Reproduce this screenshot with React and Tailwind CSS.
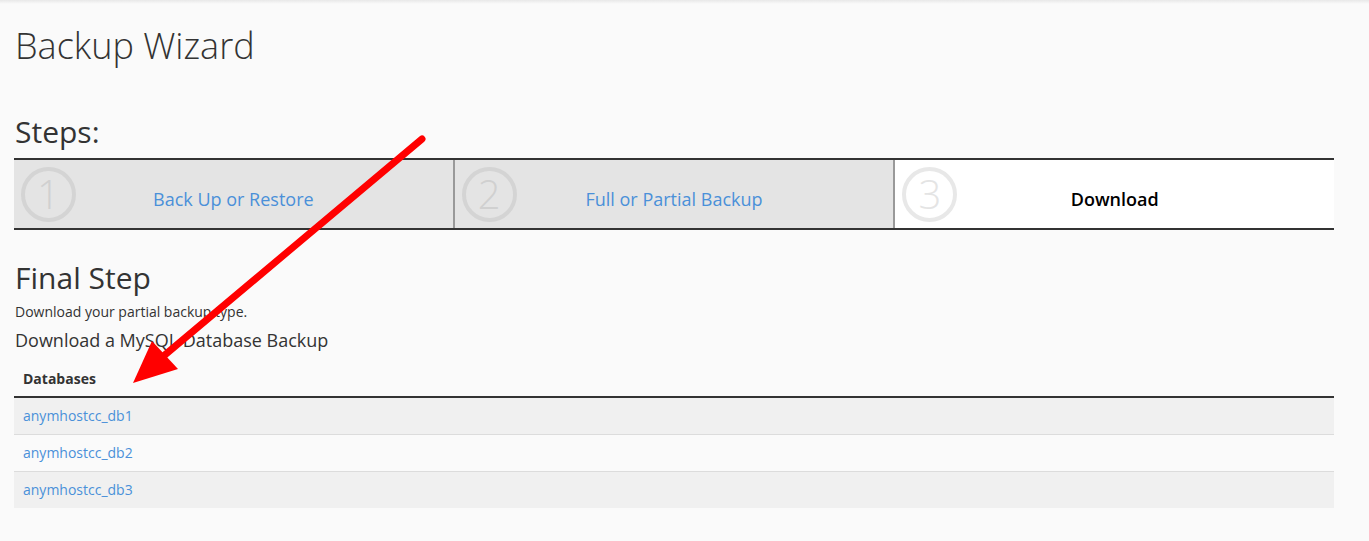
import React from 'react';

const steps = [
  { num: '1', label: 'Back Up or Restore', active: false },
  { num: '2', label: 'Full or Partial Backup', active: false },
  { num: '3', label: 'Download', active: true },
];

const databases = ['anymhostcc_db1', 'anymhostcc_db2', 'anymhostcc_db3'];

const StepCircle = ({ num, active }) => (
  <div
    className={`absolute left-[7px] top-[7px] w-[55px] h-[55px] rounded-full border-[4px] flex items-center justify-center font-light text-[40px] leading-none ${
      active ? 'border-[#e8e8e8] text-[#e4e4e4]' : 'border-[#d4d4d4] text-[#d0d0d0]'
    }`}
  >
    <span className="-mt-[2px]">{num}</span>
  </div>
);

const App = () => {
  return (
    <div className="relative min-h-[541px] bg-[#fafafa] font-['Open_Sans',sans-serif] text-[#333]">
      {/* top shadow */}
      <div className="h-[4px] bg-gradient-to-b from-[#e8e8e8] to-[#fafafa]" />

      <div className="pl-[14px] w-[1334px]">
        <h1 className="mt-[20px] pl-[1px] text-[36px] font-light leading-[44px] text-[#333]">Backup Wizard</h1>

        <h2 className="mt-[46px] pl-[1px] text-[30px] leading-[36px]">Steps:</h2>

        <div className="mt-[8px] flex border-y-2 border-[#333]">
          {steps.map((step, i) => (
            <div
              key={step.num}
              className={`relative flex-1 h-[68px] flex items-center justify-center pt-[10px] ${
                step.active ? 'bg-white' : 'bg-[#e4e4e4]'
              } ${i > 0 ? 'border-l-2 border-[#999]' : ''}`}
            >
              <StepCircle num={step.num} active={step.active} />
              {step.active ? (
                <span className="text-[18px] font-semibold text-black">{step.label}</span>
              ) : (
                <a href="#" className="text-[18px] text-[#4a90d9]">{step.label}</a>
              )}
            </div>
          ))}
        </div>

        <h2 className="mt-[30px] pl-[1px] text-[30px] leading-[36px]">Final Step</h2>
        <p className="mt-[6px] pl-[1px] text-[14px] leading-[20px]">Download your partial backup type.</p>
        <h3 className="mt-[6px] pl-[1px] text-[18px] leading-[24px]">Download a MySQL Database Backup</h3>

        <table className="mt-[12px] w-full border-collapse text-[14px]">
          <thead>
            <tr className="border-b-2 border-[#333]">
              <th className="px-[9px] pb-[3px] h-[33px] text-left font-bold">Databases</th>
            </tr>
          </thead>
          <tbody>
            {databases.map((db, i) => (
              <tr key={db} className={`${i % 2 === 0 ? 'bg-[#f0f0f0]' : 'bg-[#fafafa]'} ${i > 0 ? 'border-t border-[#dcdcdc]' : ''}`}>
                <td className="px-[9px] h-[37px]">
                  <a href="#" className="text-[#4a90d9]">{db}</a>
                </td>
              </tr>
            ))}
          </tbody>
        </table>
      </div>

      {/* annotation arrow */}
      <svg className="absolute left-0 top-0 pointer-events-none" width="1369" height="541">
        <line x1="422" y1="139" x2="160" y2="359" stroke="#ff0000" strokeWidth="7" strokeLinecap="round" />
        <polygon points="133,383 152,341 178,369" fill="#ff0000" />
      </svg>
    </div>
  );
};

export default App;
